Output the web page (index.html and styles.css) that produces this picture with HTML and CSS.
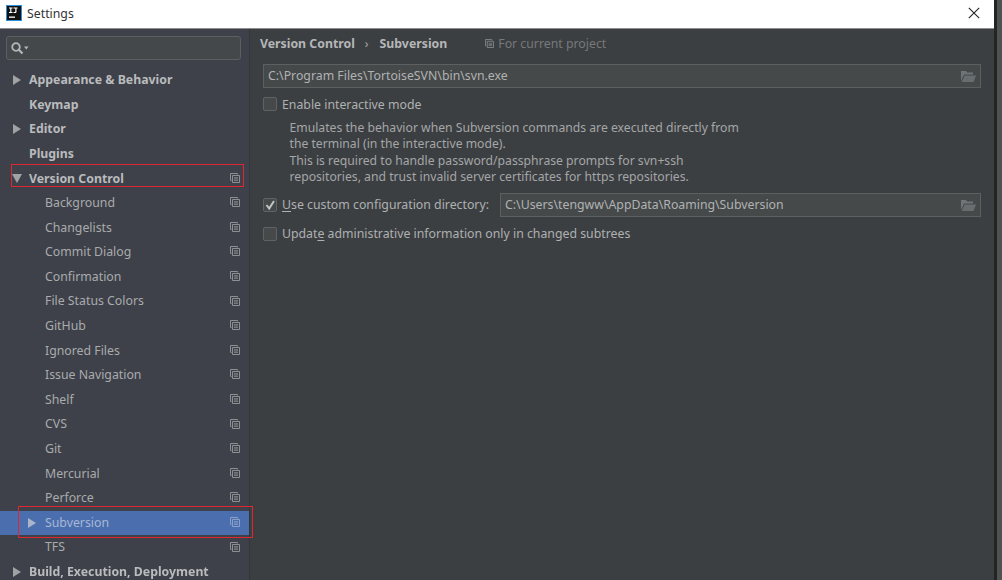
FILE: index.html
```html
<!DOCTYPE html>
<html lang="en">
<head>
<meta charset="utf-8">
<title>Settings</title>
<link rel="stylesheet" href="styles.css">
</head>
<body>
<svg class="defs" width="0" height="0" aria-hidden="true">
  <defs>
    <symbol id="copy" viewBox="0 0 10 10">
      <path d="M7.5 1.5V.5H.5v7h1" fill="none" stroke="currentColor"/>
      <path d="M2.5 2.5h7v7h-7z" fill="none" stroke="currentColor"/>
      <path d="M4 4.7h4M4 6h4M4 7.4h4" stroke="currentColor" stroke-width=".8"/>
    </symbol>
    <symbol id="folder" viewBox="0 0 16 12">
      <path d="M1 11V1h5l1 1.500h6v2H4L1 11z" fill="currentColor"/>
      <path d="M4.600 5.400H16L13.600 12H1.800z" fill="currentColor" opacity=".85"/>
    </symbol>
  </defs>
</svg>
<div class="page">
  <div class="window">
    <header class="titlebar">
      <svg class="logo" viewBox="0 0 16 16" width="16" height="16">
        <rect width="16" height="16" fill="#2b8fd8"/>
        <rect x="1" y="1" width="14" height="14" fill="#111"/>
        <path d="M3 2.500h3.600v1.100H5.400v3.300h1.200V8H3V6.900h1.200V3.600H3zM7.400 2.500h4.100v1.100h-1v3.200c0 .8-.5 1.200-1.200 1.200H7.500V6.900h1.400c.3 0 .4-.2.4-.4V3.600H7.400z" fill="#fff"/>
        <rect x="3" y="11.500" width="6" height="1.300" fill="#fff"/>
      </svg>
      <span class="title">Settings</span>
      <svg class="close" viewBox="0 0 12 12" width="12" height="12"><path d="M.8.8l10.400 10.400M11.200.8L.8 11.200" stroke="#222" stroke-width="1.100" fill="none"/></svg>
    </header>
    <div class="body">
      <aside class="sidebar">
        <div class="search">
          <svg viewBox="0 0 18 13" width="18" height="13"><circle cx="5" cy="5" r="3.800" fill="none" stroke="#b4b6b8" stroke-width="1.800"/><path d="M7.800 7.800L11.500 11.500" stroke="#b4b6b8" stroke-width="2.200"/><path d="M13 4.500h4.500l-2.250 3z" fill="#b4b6b8"/></svg>
        </div>
        <nav class="tree">
          <div class="row top"><i class="arrow right"></i><span>Appearance &amp; Behavior</span></div>
          <div class="row top"><span>Keymap</span></div>
          <div class="row top"><i class="arrow right"></i><span>Editor</span></div>
          <div class="row top"><span>Plugins</span></div>
          <div class="row top"><i class="arrow down"></i><span>Version Control</span><svg class="copy"><use href="#copy"/></svg></div>
          <div class="row sub"><span>Background</span><svg class="copy"><use href="#copy"/></svg></div>
          <div class="row sub"><span>Changelists</span><svg class="copy"><use href="#copy"/></svg></div>
          <div class="row sub"><span>Commit Dialog</span><svg class="copy"><use href="#copy"/></svg></div>
          <div class="row sub"><span>Confirmation</span><svg class="copy"><use href="#copy"/></svg></div>
          <div class="row sub"><span>File Status Colors</span><svg class="copy"><use href="#copy"/></svg></div>
          <div class="row sub"><span>GitHub</span><svg class="copy"><use href="#copy"/></svg></div>
          <div class="row sub"><span>Ignored Files</span><svg class="copy"><use href="#copy"/></svg></div>
          <div class="row sub"><span>Issue Navigation</span><svg class="copy"><use href="#copy"/></svg></div>
          <div class="row sub"><span>Shelf</span><svg class="copy"><use href="#copy"/></svg></div>
          <div class="row sub"><span>CVS</span><svg class="copy"><use href="#copy"/></svg></div>
          <div class="row sub"><span>Git</span><svg class="copy"><use href="#copy"/></svg></div>
          <div class="row sub"><span>Mercurial</span><svg class="copy"><use href="#copy"/></svg></div>
          <div class="row sub"><span>Perforce</span><svg class="copy"><use href="#copy"/></svg></div>
          <div class="row sub selected"><i class="arrow right"></i><span>Subversion</span><svg class="copy"><use href="#copy"/></svg></div>
          <div class="row sub"><span>TFS</span><svg class="copy"><use href="#copy"/></svg></div>
          <div class="row top"><i class="arrow right"></i><span>Build, Execution, Deployment</span></div>
        </nav>
        <div class="mark mark-vc"></div>
        <div class="mark mark-svn"></div>
      </aside>
      <main class="content">
        <div class="crumbs">
          <b>Version Control</b>
          <span class="sep">›</span>
          <b>Subversion</b>
          <span class="scope"><svg class="copy small"><use href="#copy"/></svg>For current project</span>
        </div>
        <div class="field"><span>C:\Program Files\TortoiseSVN\bin\svn.exe</span><svg class="folder"><use href="#folder"/></svg></div>
        <label class="check first"><i class="box"></i><span>Enable interactive mode</span></label>
        <p class="help">Emulates the behavior when Subversion commands are executed directly from<br>the terminal (in the interactive mode).<br>This is required to handle password/passphrase prompts for svn+ssh<br>repositories, and trust invalid server certificates for https repositories.</p>
        <div class="check config">
          <i class="box"><svg viewBox="0 0 14 14" width="14" height="14"><path d="M3.500 7l2.700 3.500L11 3" fill="none" stroke="#c4c4c4" stroke-width="2"/></svg></i>
          <span class="config-label"><u>U</u>se custom configuration directory:</span>
          <div class="field inline"><span>C:\Users\tengww\AppData\Roaming\Subversion</span><svg class="folder"><use href="#folder"/></svg></div>
        </div>
        <label class="check last"><i class="box"></i><span>Updat<u>e</u> administrative information only in changed subtrees</span></label>
      </main>
    </div>
  </div>
  <div class="edge"></div>
</div>
</body>
</html>
```

FILE: styles.css
```css
* { box-sizing: border-box; }
html, body { margin: 0; height: 100%; overflow: hidden; }
body { background: #56595a; font-family: "Noto Sans", sans-serif; font-size: 12.3px; color: #b4b6b8; }
.defs { position: absolute; }
.page { display: flex; height: 580px; filter: blur(.35px); }
.window { width: 994px; display: flex; flex-direction: column; }
.edge { width: 8px; border-left: 3px solid #232524; background: #4e5250; }

.titlebar { height: 29px; flex: none; display: flex; align-items: center; background: #fff; border-bottom: 1px solid #8c8e8f; padding: 0 14px 2px 6px; color: #333; }
.logo { flex: none; }
.title { margin-left: 5px; flex: 1; }
.close { flex: none; }

.body { flex: 1; display: flex; min-height: 0; }
.sidebar { position: relative; width: 250px; flex: none; background: #3e4149; border-right: 1px solid #33363a; padding-top: 7px; }
.search { height: 24px; margin: 0 8px 0 6px; background: #45484a; border: 1px solid #5c5f60; border-radius: 3px; display: flex; align-items: center; padding-left: 4px; }
.tree { margin-top: 8px; }
.row { position: relative; height: 24.6px; display: flex; align-items: center; padding-right: 9.500px; line-height: 1; white-space: nowrap; }
.row span { flex: 1; }
.top { padding-left: 29px; font-weight: 700; color: #b9bbbd; }
.sub { padding-left: 45px; color: #a9abad; }
.selected { background: #4b6eaf; color: #a8b8d4; }
.selected .copy { color: #8ba0c8; }
.arrow { position: absolute; width: 0; height: 0; border-style: solid; border-color: transparent; }
.arrow.right { left: 13px; top: 7px; border-width: 5px 0 5px 8px; border-left-color: #a0a2a4; }
.sub .arrow.right { left: 28px; border-left-color: #a9b5cb; }
.arrow.down { left: 12px; top: 8px; border-width: 9px 5px 0; border-top-color: #a0a2a4; }
.copy { width: 10px; height: 10px; flex: none; margin-bottom: 2px; color: #8e9193; }
.mark { position: absolute; border: 1px solid #e0262e; pointer-events: none; }
.mark-vc { left: 11px; top: 135px; width: 233px; height: 23px; }
.mark-svn { left: 18px; top: 477px; width: 235px; height: 32px; z-index: 1; }

.content { flex: 1; min-width: 0; background: #3c3f41; padding: 6px 13px 0 10px; }
.crumbs { height: 17px; display: flex; align-items: center; white-space: nowrap; color: #b4b6b8; }
.sep { margin: 0 11px 0 10px; font-size: 12px; color: #a8aaac; }
.scope { margin-left: 38px; display: flex; align-items: center; color: #77797b; }
.copy.small { width: 9px; height: 9px; margin: 0 4px 0 0; color: #85888a; }
.field { height: 24px; margin: 12px 0 0 3px; padding: 0 4px 1px; display: flex; align-items: center; justify-content: space-between; background: #45494a; border: 1px solid #5d6060; color: #b0b2b3; white-space: nowrap; }
.folder { width: 16px; height: 12px; flex: none; color: #6f7477; }
.check { display: flex; align-items: center; white-space: nowrap; color: #aeb0b2; }
.box { width: 14px; height: 14px; flex: none; margin: 0 5px 0 3px; background: #45494a; border: 1px solid #606364; border-radius: 2px; display: flex; align-items: center; justify-content: center; }
.box svg { flex: none; margin: -1px; }
.first { height: 18px; margin-top: 7px; }
.help { margin: 7px 0 0 29.500px; font-size: 12.200px; line-height: 16.400px; color: #a4a6a8; white-space: nowrap; }
.config { height: 24px; margin-top: 7px; }
.config-label { margin-right: 11px; }
.field.inline { flex: 1; margin: 0; padding-bottom: 0; }
.last { height: 18px; margin-top: 8px; }
u { text-underline-offset: 2px; }
```
